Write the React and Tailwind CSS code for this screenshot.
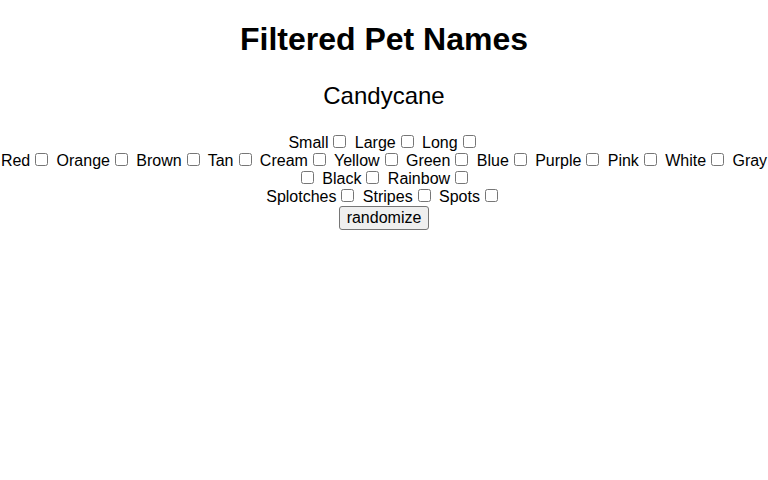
import { useState } from 'react';

const sizes = ['Small', 'Large', 'Long'];
const colors = ['Red', 'Orange', 'Brown', 'Tan', 'Cream', 'Yellow', 'Green', 'Blue', 'Purple', 'Pink', 'White', 'Gray', 'Black', 'Rainbow'];
const patterns = ['Splotches', 'Stripes', 'Spots'];

function CheckGroup({ items, checked, onToggle }) {
  return (
    <div>
      {items.map((item) => (
        <span key={item}>
          {item}
          <input
            type="checkbox"
            checked={!!checked[item]}
            onChange={() => onToggle(item)}
            className="ml-[5px] mr-[3.9px] my-0 align-baseline"
          />{' '}
        </span>
      ))}
    </div>
  );
}

export default function App() {
  const [checked, setChecked] = useState({});
  const [name, setName] = useState('Candycane');

  const toggle = (item) => setChecked((prev) => ({ ...prev, [item]: !prev[item] }));

  const randomize = () => {
    const names = ['Candycane', 'Biscuit', 'Pepper', 'Mochi', 'Sprinkles'];
    setName(names[Math.floor(Math.random() * names.length)]);
  };

  return (
    <div className="text-center text-black text-[16px] font-['Liberation_Sans',Arial,sans-serif] leading-[normal]">
      <h1 className="text-[32px] font-bold mt-[21.44px] mb-[21.44px]">Filtered Pet Names</h1>
      <p className="text-[24px] my-[24px]">{name}</p>
      <CheckGroup items={sizes} checked={checked} onToggle={toggle} />
      <CheckGroup items={colors} checked={checked} onToggle={toggle} />
      <CheckGroup items={patterns} checked={checked} onToggle={toggle} />
      <button
        onClick={randomize}
        className="bg-[#efefef] border border-[#767676] rounded-[3px] px-[7px] py-[2px] text-black leading-[normal]"
      >
        randomize
      </button>
    </div>
  );
}
